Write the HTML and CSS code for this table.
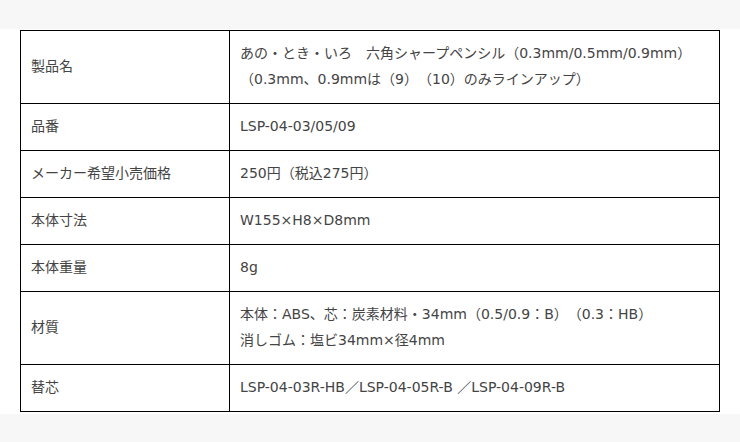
FILE: index.html
```html
<!DOCTYPE html>
<html lang="ja">
<head>
<meta charset="utf-8">
<link rel="stylesheet" href="styles.css">
</head>
<body>
<div class="top-band"></div>
<section class="spec">
  <table class="spec-table">
    <tr>
      <th>製品名</th>
      <td>あの・とき・いろ　六角シャープペンシル（0.3mm/0.5mm/0.9mm）<br>（0.3mm、0.9mmは（9）（10）のみラインアップ）</td>
    </tr>
    <tr>
      <th>品番</th>
      <td>LSP-04-03/05/09</td>
    </tr>
    <tr>
      <th>メーカー希望小売価格</th>
      <td>250円（税込275円）</td>
    </tr>
    <tr>
      <th>本体寸法</th>
      <td>W155×H8×D8mm</td>
    </tr>
    <tr>
      <th>本体重量</th>
      <td>8g</td>
    </tr>
    <tr>
      <th>材質</th>
      <td>本体：ABS、芯：炭素材料・34mm（0.5/0.9：B）（0.3：HB）<br>消しゴム：塩ビ34mm×径4mm</td>
    </tr>
    <tr>
      <th>替芯</th>
      <td>LSP-04-03R-HB／LSP-04-05R-B ／LSP-04-09R-B</td>
    </tr>
  </table>
</section>
</body>
</html>
```
FILE: styles.css
```css
html, body {
  margin: 0;
  padding: 0;
  background: #f7f7f7;
}
body {
  font-family: "DejaVu Sans", "Noto Sans CJK JP", sans-serif;
  font-size: 14px;
  color: #444;
  text-spacing-trim: space-all;
}
.top-band {
  height: 29px;
}
.spec {
  background: #fff;
  padding: 1px 20px 2px;
}
.spec-table {
  width: 700px;
  border-collapse: collapse;
  table-layout: fixed;
}
.spec-table th,
.spec-table td {
  border: 1px solid #000;
  padding: 9px 12px 11px 10px;
  line-height: 26px;
  text-align: left;
  font-weight: normal;
  vertical-align: middle;
}
.spec-table th {
  width: 186px;
}
```
